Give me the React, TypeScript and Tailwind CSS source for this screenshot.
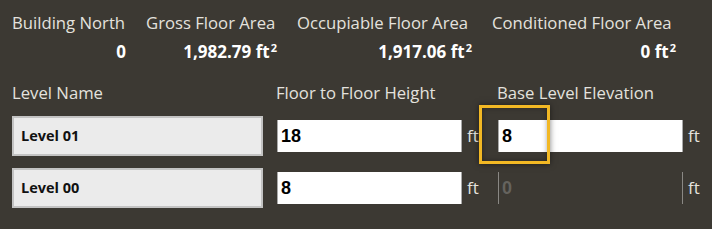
import React from "react";

const label = "text-[16.7px] leading-[20px] text-[#e4e2de] whitespace-nowrap";
const value = "text-[17px] leading-[20px] font-bold text-white whitespace-nowrap text-right";

function Sup({ v }: { v: string }) {
  return (
    <span>
      {v} ft<span className="text-[11px] relative -top-[6px] ml-[1px]">2</span>
    </span>
  );
}

function Row({ name, h, base, active }: { name: string; h: string; base: string; active?: boolean }) {
  return (
    <div className="flex items-center h-[40px]">
      <div className="w-[251px] h-[40px] bg-[#ebebeb] border-2 border-[#c3c3c3] flex items-center pl-[7px] text-[14.5px] font-bold text-[#111]" style={{ fontFamily: '"Open Sans", "Noto Sans", sans-serif' }}>
        {name}
      </div>
      <div className="ml-[14px] w-[185px] h-[32px] bg-white border-l border-r border-[#a9a9a9] flex items-center pl-[3px] text-[18px] font-bold text-black" style={{ fontFamily: '"Liberation Sans", Arial, sans-serif' }}>
        {h}
      </div>
      <div className="w-[36px] pl-[5px] text-[17px] text-[#e4e2de]">ft</div>
      {active ? (
        <div className="w-[185px] h-[32px] bg-white border-l border-r border-[#a9a9a9] flex items-center pl-[3px] text-[18px] font-bold text-black" style={{ fontFamily: '"Liberation Sans", Arial, sans-serif' }}>
          {base}
        </div>
      ) : (
        <div className="w-[185px] h-[32px] border-l border-r border-[#8a8884] flex items-center pl-[3px] text-[18px] font-bold text-[#65635e]" style={{ fontFamily: '"Liberation Sans", Arial, sans-serif' }}>
          {base}
        </div>
      )}
      <div className="pl-[5px] text-[17px] text-[#e4e2de]">ft</div>
    </div>
  );
}

export default function App() {
  return (
    <div className="relative w-[712px] h-[229px] bg-[#3c3933] pl-[12px] pt-[13px] overflow-hidden" style={{ fontFamily: '"Open Sans", "Noto Sans", sans-serif' }}>
      <div className="flex gap-[20px]">
        <div className="w-[114px] flex flex-col">
          <div className={label}>Building North</div>
          <div className={value + " mt-[9px]"}>0</div>
        </div>
        <div className="w-[131px] flex flex-col">
          <div className={label}>Gross Floor Area</div>
          <div className={value + " mt-[9px]"}><Sup v="1,982.79" /></div>
        </div>
        <div className="w-[175px] flex flex-col">
          <div className={label}>Occupiable Floor Area</div>
          <div className={value + " mt-[9px]"}><Sup v="1,917.06" /></div>
        </div>
        <div className="w-[184px] flex flex-col">
          <div className={label}>Conditioned Floor Area</div>
          <div className={value + " mt-[9px]"}><Sup v="0" /></div>
        </div>
      </div>
      <div className="flex mt-[19px]">
        <div className={label + " w-[264px]"}>Level Name</div>
        <div className={label + " w-[221px]"}>Floor to Floor Height</div>
        <div className={label}>Base Level Elevation</div>
      </div>
      <div className="mt-[13px] flex flex-col gap-[12px]">
        <Row name="Level 01" h="18" base="8" active />
        <Row name="Level 00" h="8" base="0" />
      </div>
      <div className="absolute left-[479px] top-[105px] w-[71px] h-[59px] border-[3px] border-[#f2b824] shadow-[0_0_6px_rgba(0,0,0,0.5),inset_0_0_5px_rgba(0,0,0,0.35)]" />
    </div>
  );
}
